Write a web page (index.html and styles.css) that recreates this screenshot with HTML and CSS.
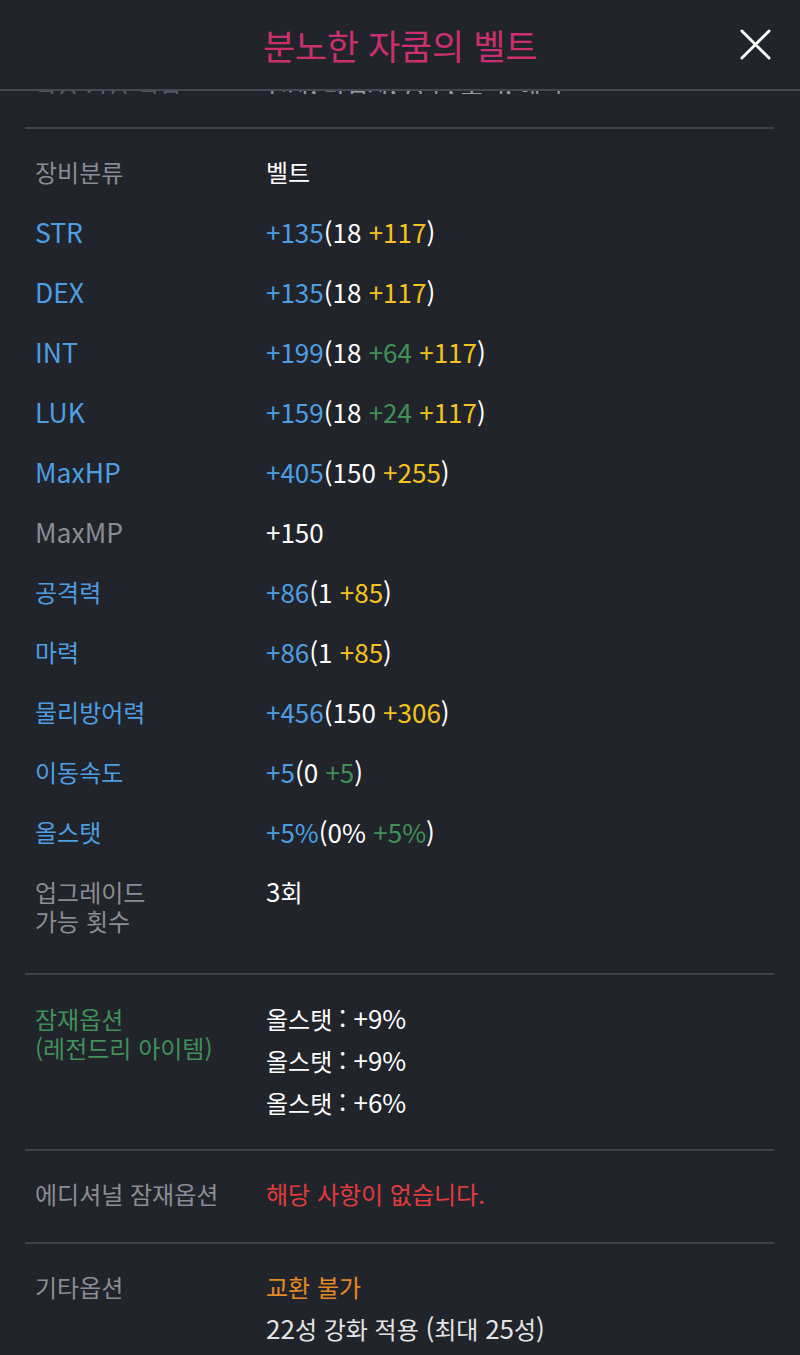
FILE: index.html
```html
<!DOCTYPE html>
<html lang="ko">
<head>
<meta charset="utf-8">
<title>분노한 자쿰의 벨트</title>
<link rel="stylesheet" href="styles.css">
</head>
<body>
<header class="topbar">
  <h1 class="title">분노한 자쿰의 벨트</h1>
  <button class="close" aria-label="닫기">
    <svg viewBox="0 0 32 32" width="32" height="32"><path d="M2 2 L30 30 M30 2 L2 30" stroke="#fff" stroke-width="3" stroke-linecap="round" fill="none"/></svg>
  </button>
</header>
<main class="sheet">
  <div class="peek">
    <div class="row peek-row">
      <span class="label gray">착용 가능 직업</span>
      <span class="val white">전사, 마법사, 궁수, 도적, 해적</span>
    </div>
  </div>

  <section class="group first">
    <div class="row"><span class="label gray">장비분류</span><span class="val white">벨트</span></div>
    <div class="row"><span class="label blue n">STR</span><span class="val n"><span class="blue">+135</span><span class="white">(18 </span><span class="yellow">+117</span><span class="white">)</span></span></div>
    <div class="row"><span class="label blue n">DEX</span><span class="val n"><span class="blue">+135</span><span class="white">(18 </span><span class="yellow">+117</span><span class="white">)</span></span></div>
    <div class="row"><span class="label blue n">INT</span><span class="val n"><span class="blue">+199</span><span class="white">(18 </span><span class="green">+64</span> <span class="yellow">+117</span><span class="white">)</span></span></div>
    <div class="row"><span class="label blue n">LUK</span><span class="val n"><span class="blue">+159</span><span class="white">(18 </span><span class="green">+24</span> <span class="yellow">+117</span><span class="white">)</span></span></div>
    <div class="row"><span class="label blue n">MaxHP</span><span class="val n"><span class="blue">+405</span><span class="white">(150 </span><span class="yellow">+255</span><span class="white">)</span></span></div>
    <div class="row"><span class="label gray n">MaxMP</span><span class="val white n">+150</span></div>
    <div class="row"><span class="label blue">공격력</span><span class="val n"><span class="blue">+86</span><span class="white">(1 </span><span class="yellow">+85</span><span class="white">)</span></span></div>
    <div class="row"><span class="label blue">마력</span><span class="val n"><span class="blue">+86</span><span class="white">(1 </span><span class="yellow">+85</span><span class="white">)</span></span></div>
    <div class="row"><span class="label blue">물리방어력</span><span class="val n"><span class="blue">+456</span><span class="white">(150 </span><span class="yellow">+306</span><span class="white">)</span></span></div>
    <div class="row"><span class="label blue">이동속도</span><span class="val n"><span class="blue">+5</span><span class="white">(0 </span><span class="green">+5</span><span class="white">)</span></span></div>
    <div class="row"><span class="label blue">올스탯</span><span class="val n"><span class="blue">+5%</span><span class="white">(0% </span><span class="green">+5%</span><span class="white">)</span></span></div>
    <div class="row"><span class="label gray two">업그레이드<br>가능 횟수</span><span class="val white"><span class="n">3</span>회</span></div>
  </section>

  <section class="group pot">
    <div class="row"><span class="label green two">잠재옵션<br>(레전드리 아이템)</span>
      <span class="val list white"><span>올스탯 <span class="n">: +9%</span></span><span>올스탯 <span class="n">: +9%</span></span><span>올스탯 <span class="n">: +6%</span></span></span></div>
  </section>

  <section class="group add">
    <div class="row"><span class="label gray">에디셔널 잠재옵션</span><span class="val red">해당 사항이 없습니다.</span></div>
  </section>

  <section class="group last">
    <div class="row"><span class="label gray">기타옵션</span>
      <span class="val list"><span class="orange">교환 불가</span><span class="light"><span class="n">22</span>성 강화 적용 <span class="n">(</span>최대 <span class="n">25</span>성<span class="n">)</span></span></span></div>
  </section>
</main>
</body>
</html>
```

FILE: styles.css
```css
html, body {
  margin: 0;
  padding: 0;
  background: #22242b;
}
body {
  font-family: "Noto Sans CJK KR", "Noto Sans", sans-serif;
  font-size: 24px;
  color: #ffffff;
  overflow: hidden;
  height: 1355px;
}
.topbar {
  height: 89px;
  display: flex;
  align-items: center;
  justify-content: center;
  position: relative;
  border-bottom: 2px solid #454852;
}
.title {
  margin: 0;
  font-size: 35px;
  font-weight: 400;
  color: #c9306d;
  letter-spacing: -0.3px;
}
.close {
  position: absolute;
  right: 29px;
  top: 29px;
  width: 31px;
  height: 31px;
  padding: 0;
  border: 0;
  background: none;
  display: flex;
}
.close svg {
  width: 31px;
  height: 31px;
}
.sheet {
  margin: 0 26px 0 25px;
}
.peek {
  height: 3px;
  overflow: hidden;
  margin-bottom: 33px;
  opacity: 0.55;
}
.peek-row {
  line-height: 24px;
  margin-top: -21px;
  padding: 0 0 0 10px !important;
}
.group {
  border-top: 2px solid #3f414a;
  padding: 13px 0 23px;
}
.group.pot {
  padding: 14px 0 16px;
}
.group.add {
  padding: 13px 0 18px;
}
.group.last {
  padding: 13px 0 0;
}
.row {
  display: grid;
  grid-template-columns: 231px 1fr;
  padding: 15px 0 15px 10px;
  line-height: 30px;
}
.label { white-space: nowrap; }
.two { line-height: 29px; }
.n {
  font-size: 26px;
}
.val span.n, .light .n {
  line-height: 1;
}
.label.n, .val.n {
  line-height: 30px;
}
.label.n { font-size: 26.5px; }
.list {
  display: flex;
  flex-direction: column;
  gap: 12px;
}
.gray { color: #8b8d94; }
.white { color: #ffffff; }
.light { color: #e4e4e6; }
.blue { color: #4d9fe3; }
.yellow { color: #f4c41c; }
.green { color: #3f9158; }
.red { color: #e23b3b; }
.orange { color: #e38b1f; }
```
